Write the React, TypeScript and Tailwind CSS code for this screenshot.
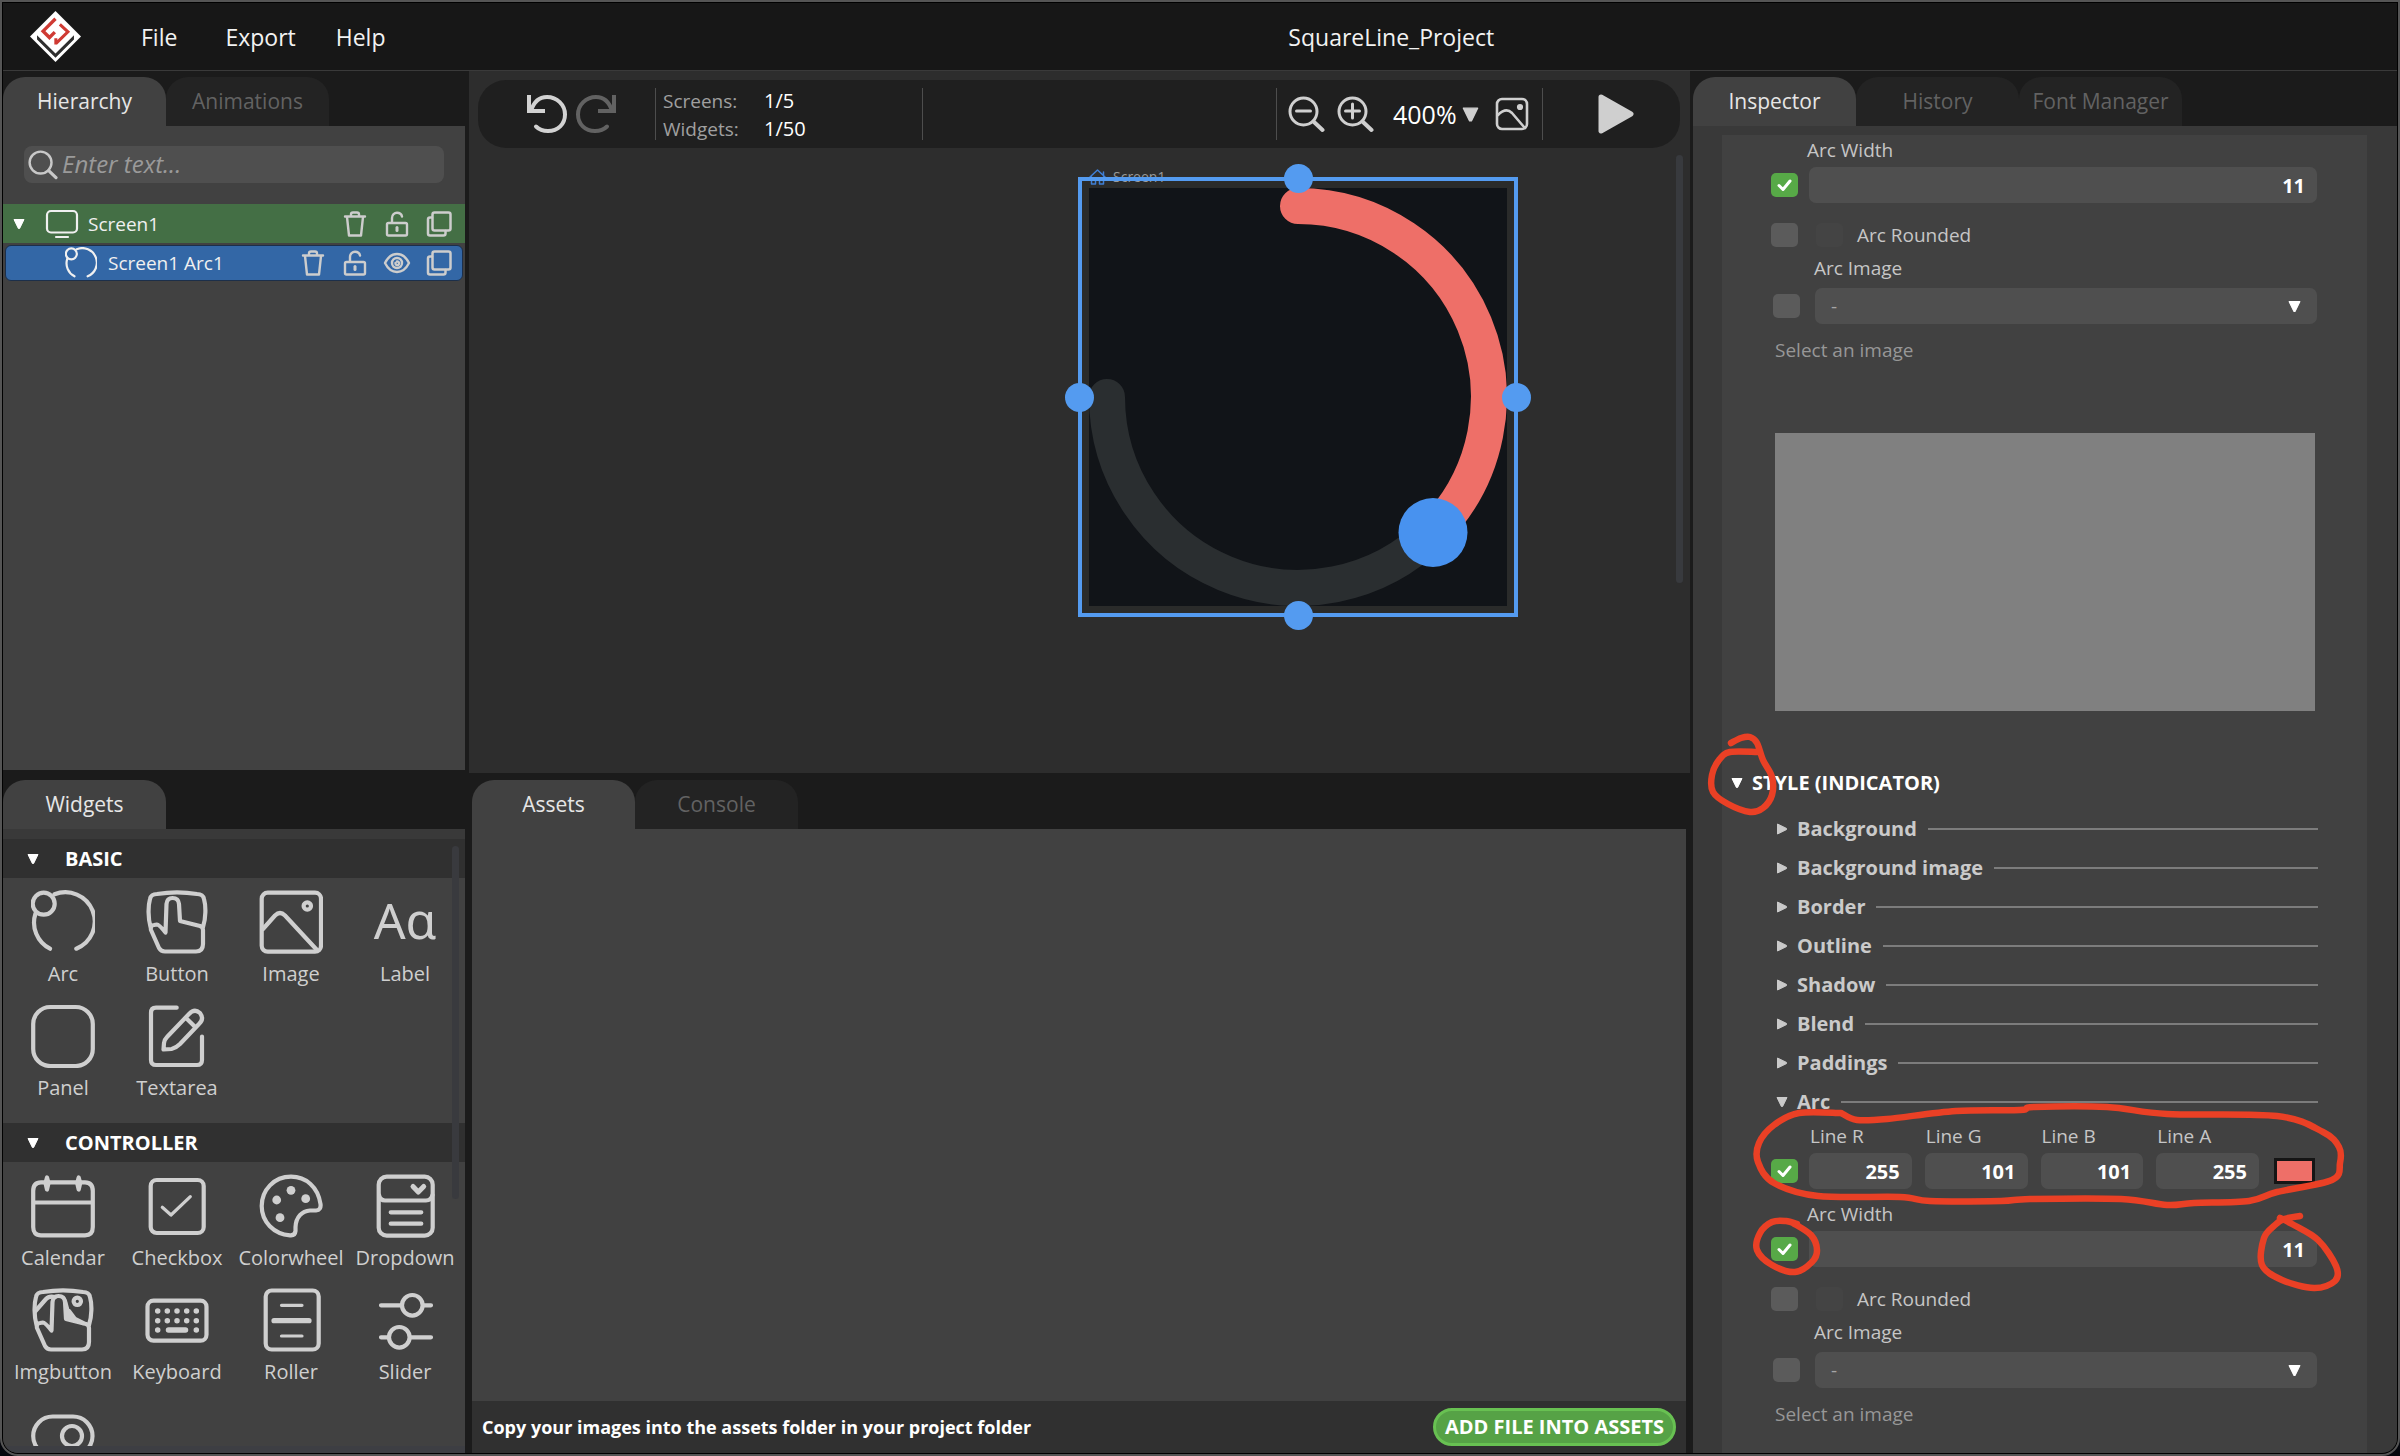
import React, { useId } from "react";

type IconProps = { className?: string };

const stroke = {
  fill: "none",
  stroke: "currentColor",
  strokeLinecap: "round" as const,
  strokeLinejoin: "round" as const,
};

/* ---------- small icons ---------- */

function Triangle({ className = "", dir = "down" }: IconProps & { dir?: "down" | "right" }) {
  return (
    <svg viewBox="0 0 12 12" className={className} aria-hidden="true">
      <path d={dir === "down" ? "M1 1.5H11L6.6 10.5H5.4Z" : "M1.5 1V11L10.5 6.6V5.4Z"} fill="currentColor" stroke="currentColor" strokeLinejoin="round" />
    </svg>
  );
}

function Logo() {
  return (
    <svg viewBox="91 31 152 152" className="size-[51px] shrink-0" role="img" aria-label="SquareLine">
      <path d="M167 31L243 107L167 183L91 107Z" fill="#fff" />
      <path d="M167 54L130 91L149 110L165 94" fill="none" stroke="#cf3a33" strokeWidth="10" />
      <path d="M180 71L204 93L168 128M168 131V112" fill="none" stroke="#cf3a33" strokeWidth="9" />
      <path d="M112 103L167 158L222 103V116L167 170L112 116Z" fill="#2e2e2e" />
    </svg>
  );
}

function SearchIcon({ className = "", sign }: IconProps & { sign?: "minus" | "plus" }) {
  return (
    <svg viewBox="0 0 37 37" className={className} aria-hidden="true" {...stroke} strokeWidth="3">
      <circle cx="15.5" cy="15.5" r="13.5" />
      <path d="M25.5 25.5L34.5 34" strokeWidth="4" />
      {sign && <path d="M8.5 15H22.5" />}
      {sign === "plus" && <path d="M15.5 8V22" />}
    </svg>
  );
}

function MonitorIcon() {
  return (
    <svg viewBox="0 0 34 30" className="h-[30px] w-[34px]" aria-hidden="true" {...stroke} strokeWidth="2.2">
      <rect x="2" y="2" width="30" height="21.5" rx="4" />
      <path d="M11 28H23" />
    </svg>
  );
}

function TrashIcon() {
  return (
    <svg viewBox="0 0 28 28" className="size-7" aria-hidden="true" {...stroke} strokeWidth="2.4">
      <path d="M4 6.5H24M10 6V4.2Q10 2.5 12 2.5H16Q18 2.5 18 4.2V6M6 7L8 25.5H20L22 7" />
    </svg>
  );
}

function LockIcon() {
  return (
    <svg viewBox="0 0 28 28" className="size-7" aria-hidden="true" {...stroke} strokeWidth="2.4">
      <rect x="4" y="13" width="20" height="12.5" rx="1.5" />
      <path d="M9 12.5V8C9 4.5 11.5 2.8 14 2.8C16.5 2.8 18.5 4.2 19 6.5" />
      <path d="M14 17.5V20.5" strokeWidth="3" />
    </svg>
  );
}

function CopyIcon() {
  return (
    <svg viewBox="0 0 28 28" className="size-7" aria-hidden="true" {...stroke} strokeWidth="2.5">
      <rect x="7.5" y="2.5" width="18" height="18" rx="2" />
      <path d="M7 7.5H5Q3 7.5 3 9.5V23.5Q3 25.5 5 25.5H18.5Q20.5 25.5 20.5 23.5V21" />
    </svg>
  );
}

function EyeIcon() {
  return (
    <svg viewBox="0 0 28 28" className="size-7" aria-hidden="true" {...stroke} strokeWidth="2.4">
      <path d="M2 14C5 8 9.5 5 14 5S23 8 26 14C23 20 18.5 23 14 23S5 20 2 14Z" />
      <circle cx="14" cy="14" r="5" />
      <path d="M14 12.5A1.8 1.8 0 1 1 12.5 14" />
    </svg>
  );
}

function PictureIcon() {
  return (
    <svg viewBox="0 0 34 34" className="size-[34px]" aria-hidden="true" {...stroke} strokeWidth="2.6">
      <rect x="2" y="2" width="30" height="30" rx="5" />
      <path d="M3 18Q11 10 17 16L29 30" />
      <circle cx="25" cy="10" r="1.8" fill="currentColor" />
    </svg>
  );
}

function UndoIcon({ className = "", flip = false }: IconProps & { flip?: boolean }) {
  return (
    <svg viewBox="0 0 40 40" className={className} aria-hidden="true" {...stroke} strokeWidth="4">
      <g transform={flip ? "translate(40 0) scale(-1 1)" : undefined}>
        <path d="M4 17C7 7 13 3 20 3C30 3 38 11 38 20.5C38 30 31 37 21 37C16 37 11.5 35 9 32.5" />
        <path d="M2 3V17H16" strokeLinecap="square" strokeLinejoin="miter" />
      </g>
    </svg>
  );
}

function PlayIcon() {
  return (
    <svg viewBox="0 0 36 40" className="h-10 w-9" aria-hidden="true">
      <path d="M3 3L33 20L3 37Z" fill="currentColor" stroke="currentColor" strokeWidth="5" strokeLinejoin="round" />
    </svg>
  );
}

function HomeIcon() {
  return (
    <svg viewBox="0 0 17 16" className="h-4 w-[17px]" aria-hidden="true" {...stroke} strokeWidth="1.5">
      <path d="M1 8L8.5 1L16 8M2.5 8V15H6.5V10.5H10.5V15H14.5V8M14.5 3V6" />
    </svg>
  );
}

/* ---------- widget palette icons, 64 x 64 ---------- */

const handOutline = "M5.5 37C3 28 3 16 5 9Q6 4 12 4C24 2 40 2 52 4Q58 4 59 9C61 16 61 28 58 37";
const handShape =
  "M6 40Q5 35.5 9 35L12 34.5Q14 34.5 20.5 42.5L21.5 14Q22 8 27.5 8Q33.5 8 34 14L35 31L55 36Q58 37 58 40V54Q58 61.5 51 61.5H20Q16 61.5 14 58Z";

const glyphs: Record<string, React.ReactNode> = {
  Arc: (
    <>
      <circle cx="12.7" cy="13.7" r="11" />
      <path d="M23.5 4.3A29.3 29.3 0 0 1 45.3 58.7M4.5 23.5A29.3 29.3 0 0 0 19 58.7" />
    </>
  ),
  Button: <path d={handOutline + handShape} />,
  Image: (
    <>
      <rect x="2.7" y="2.7" width="59.3" height="59" rx="6" />
      <path d="M4 39L16 25.5Q21 20.5 26 25.5L57.5 59.5" />
      <circle cx="48.3" cy="16" r="3.7" />
    </>
  ),
  Panel: <rect x="2.2" y="3" width="59.6" height="59" rx="17" />,
  Textarea: (
    <>
      <path d="M31.7 3.7H11Q6 3.7 6 9V56Q6 61 11 61H52Q57 61 57 56V32.5" />
      <path d="M18.5 45.5L19 39Q19.5 35.5 22 33L44 10Q49.5 4 55 9Q59.5 15 54 20L35 40Q31 44 26.5 45ZM40.7 13.7L50 22.7" />
    </>
  ),
  Calendar: (
    <>
      <path d="M10 8.3H54Q61.8 8.3 61.8 17V53Q61.8 61.3 54 61.3H10Q2.2 61.3 2.2 53V17Q2.2 8.3 10 8.3ZM3 28.5H61" />
      <path d="M16 3.5L17.5 9L16 15.5L14.5 9ZM47.7 3.5L49.2 9L47.7 15.5L46.2 9Z" />
    </>
  ),
  Checkbox: (
    <>
      <rect x="5.7" y="6" width="53" height="53" rx="6" />
      <path d="M17.3 33.3L26 41L45.3 22.7" strokeWidth="3.2" />
    </>
  ),
  Colorwheel: (
    <>
      <path d="M61.5 30C59 13 47 2.7 32 2.7C15 2.7 2.7 16 2.7 32C2.7 48 15 60 31 61.3Q36 61.8 36.5 57V53C37 43 43 37 51 36.5H57Q62.3 36 61.5 30Z" />
      <g fill="currentColor" stroke="none">
        <circle cx="32" cy="16.3" r="4.4" />
        <circle cx="17.7" cy="26" r="4.4" />
        <circle cx="46.7" cy="24.7" r="4.4" />
        <circle cx="21" cy="43.7" r="4.4" />
      </g>
    </>
  ),
  Dropdown: (
    <>
      <rect x="5.7" y="2.7" width="54" height="59" rx="8" />
      <path d="M6 21Q7 26.5 12 26.5H53Q58 26.5 59.5 21M17.7 38.3H48.3M17.7 49.7H48.3" />
      <path d="M40 12.5L45.3 18L50.7 12.5" strokeWidth="5" />
    </>
  ),
  Imgbutton: (
    <>
      <path d={handOutline + handShape} />
      <path d="M4.5 23L15 11Q18 7.5 24 9M34 13L38 28L52 35M38 23L44 31" />
      <circle cx="46.3" cy="13.3" r="3.7" />
    </>
  ),
  Keyboard: (
    <>
      <rect x="2.5" y="12.7" width="59" height="40" rx="6" />
      <path d="M23.5 42H40.5" strokeWidth="5.5" />
      <g strokeWidth="5.5">
        <path d="M12.7 23h.01M22.3 23h.01M32 23h.01M41.7 23h.01M51.3 23h.01" />
        <path d="M12.7 32.7h.01M22.3 32.7h.01M32 32.7h.01M41.7 32.7h.01M51.3 32.7h.01" />
        <path d="M12.7 42h.01M51.3 42h.01" />
      </g>
    </>
  ),
  Roller: (
    <>
      <rect x="6.7" y="2.5" width="53" height="59" rx="6" />
      <path d="M22.5 17.3H43M22.5 48H43" strokeWidth="3.2" />
      <path d="M15 32.7H50" strokeWidth="5.2" />
    </>
  ),
  Slider: (
    <>
      <circle cx="39.3" cy="17.3" r="10.3" />
      <circle cx="26.3" cy="49.3" r="10.3" />
      <path d="M8 17.3H28M51 17.3H58M8 49.3H15M38 49.3H58" />
    </>
  ),
  Switch: (
    <>
      <rect x="2.2" y="14.5" width="59.3" height="39" rx="19.5" />
      <circle cx="41" cy="34" r="10" />
    </>
  ),
};

function WidgetIcon({ name, className = "size-16", weight = 4.2 }: { name: string; className?: string; weight?: number }) {
  if (name === "Label") {
    return (
      <span aria-hidden="true" className="flex h-16 items-center justify-center pb-1 font-['Noto_Sans'] text-[50px] leading-none">
        Aɑ
      </span>
    );
  }
  return (
    <svg viewBox="0 0 64 64" className={className} aria-hidden="true" {...stroke} strokeWidth={weight}>
      {glyphs[name]}
    </svg>
  );
}

/* ---------- shared pieces ---------- */

function Tabs({ tabs }: { tabs: string[] }) {
  return (
    <div role="tablist" className="flex h-[49px]">
      {tabs.map((t, i) => (
        <button
          key={t}
          role="tab"
          aria-selected={i === 0}
          className={
            "w-[163px] rounded-t-[22px] pb-0.5 text-[21px] leading-7 whitespace-nowrap " +
            (i === 0 ? "bg-[#414141] text-[#e6e6e6]" : "bg-[#232323] text-[#626262]")
          }
        >
          {t}
        </button>
      ))}
    </div>
  );
}

function RowButton({ label, children }: { label: string; children: React.ReactNode }) {
  return (
    <button aria-label={label} className="text-[#cdcdcd]">
      {children}
    </button>
  );
}

/* ---------- left column ---------- */

function Hierarchy() {
  return (
    <section className="flex min-h-0 flex-1 flex-col pt-1.5">
      <Tabs tabs={["Hierarchy", "Animations"]} />
      <div className="flex-1 bg-[#414141] pt-5">
        <label className="mr-[21px] ml-[21px] flex h-[37px] items-center gap-1 rounded-lg bg-[#4f4f4f] pl-1">
          <SearchIcon className="size-[30px] text-[#c8c8c8]" />
          <input
            aria-label="Search hierarchy"
            placeholder="Enter text..."
            className="min-w-0 flex-1 bg-transparent pb-0.5 text-2xl leading-8 text-white italic outline-none placeholder:text-[#9a9a9a]"
          />
        </label>
        <ul className="mt-[21px] text-[19px] leading-7 text-[#f0f0f0]">
          <li className="flex h-[39px] items-center bg-[#446f45] pr-3 pl-2.5">
            <Triangle className="size-3 text-white" />
            <span className="ml-5">
              <MonitorIcon />
            </span>
            <span className="ml-[9px] flex-1">Screen1</span>
            <span className="flex gap-[14px]">
              <RowButton label="Delete Screen1"><TrashIcon /></RowButton>
              <RowButton label="Lock Screen1"><LockIcon /></RowButton>
              <RowButton label="Duplicate Screen1"><CopyIcon /></RowButton>
            </span>
          </li>
          <li className="mx-0.5 mt-0.5 flex h-9 items-center rounded-md border border-[#1c2f4a] bg-[#3367a6] pr-[9px] pl-[59px]">
            <WidgetIcon name="Arc" className="size-8" weight={4.4} />
            <span className="ml-[11px] flex-1">Screen1 Arc1</span>
            <span className="flex gap-[14px]">
              <RowButton label="Delete Arc1"><TrashIcon /></RowButton>
              <RowButton label="Lock Arc1"><LockIcon /></RowButton>
              <RowButton label="Hide Arc1"><EyeIcon /></RowButton>
              <RowButton label="Duplicate Arc1"><CopyIcon /></RowButton>
            </span>
          </li>
        </ul>
      </div>
    </section>
  );
}

function PaletteGroup({ title, items, more }: { title: string; items: string[]; more?: string }) {
  return (
    <div>
      <button className="flex h-[39px] w-full items-center gap-[26px] bg-[#303030] pl-6 text-xl leading-6 font-bold text-white">
        <Triangle className="size-3" />
        {title}
      </button>
      <div className="grid grid-cols-4 gap-y-4 px-[3px] pt-3 pb-[21px]">
        {items.map((n) => (
          <button key={n} className="flex h-[98px] flex-col items-center justify-between text-xl leading-7 text-[#cfcfcf]">
            <WidgetIcon name={n} />
            {n}
          </button>
        ))}
        {more && (
          <button aria-label={more} className="flex justify-center text-[#cfcfcf]">
            <WidgetIcon name={more} />
          </button>
        )}
      </div>
    </div>
  );
}

function Widgets() {
  return (
    <section className="flex h-[683px] flex-col pt-2.5">
      <Tabs tabs={["Widgets"]} />
      <div className="relative flex min-h-0 flex-1 flex-col border-t-[10px] border-[#393939] bg-[#414141]">
        <div className="min-h-0 flex-1 overflow-hidden">
          <PaletteGroup title="BASIC" items={["Arc", "Button", "Image", "Label", "Panel", "Textarea"]} />
          <PaletteGroup
            title="CONTROLLER"
            items={["Calendar", "Checkbox", "Colorwheel", "Dropdown", "Imgbutton", "Keyboard", "Roller", "Slider"]}
            more="Switch"
          />
        </div>
        <div className="h-[7px] bg-[#3d3e43]" />
        <div className="absolute top-[7px] right-1.5 h-[353px] w-[7px] rounded-full bg-[#393a3e]" />
      </div>
    </section>
  );
}

/* ---------- centre column ---------- */

const divider = "h-[52px] w-px bg-[#4d4d4d]";

function Toolbar() {
  return (
    <div className="mr-2.5 ml-[9px] flex h-[68px] items-center rounded-[28px] bg-[#1f1f1f] pr-[46px] pl-[49px]">
      <button aria-label="Undo"><UndoIcon className="size-10 text-[#d2d2d2]" /></button>
      <button aria-label="Redo" className="ml-[9px]"><UndoIcon flip className="size-10 text-[#626262]" /></button>
      <div className={"ml-[39px] " + divider} />
      <dl className="grid w-[266px] grid-cols-[101px_1fr] pt-0.5 pl-[7px] leading-7">
        <dt className="text-[19px] text-[#a0a0a0]">Screens:</dt>
        <dd className="text-xl leading-7 text-white">1/5</dd>
        <dt className="text-[19px] text-[#a0a0a0]">Widgets:</dt>
        <dd className="text-xl leading-7 text-white">1/50</dd>
      </dl>
      <div className={divider} />
      <div className="ml-auto flex items-center text-[#cfcfcf]">
        <div className={divider} />
        <button aria-label="Zoom out" className="ml-[11px]"><SearchIcon sign="minus" className="size-[37px]" /></button>
        <button aria-label="Zoom in" className="ml-3"><SearchIcon sign="plus" className="size-[37px]" /></button>
        <button className="ml-[19px] flex w-[90px] items-center gap-[5px] text-[25px] leading-8 text-white">
          400%
          <Triangle className="size-[17px] shrink-0 text-[#cfcfcf]" />
        </button>
        <button aria-label="Background picture" className="ml-3"><PictureIcon /></button>
        <div className={"ml-[13px] " + divider} />
        <button aria-label="Play" className="ml-[55px]"><PlayIcon /></button>
      </div>
    </div>
  );
}

const handle = "absolute size-[29px] rounded-full bg-[#549bf0]";

function Canvas() {
  return (
    <div className="relative flex min-h-0 flex-1 flex-col overflow-hidden bg-[#2d2d2d] pt-[9px]">
      <Toolbar />
      <div className="absolute top-[117px] left-[620px] size-[418px] bg-[#111418] ring-[7px] ring-[#2a2b2a]">
        <svg viewBox="0 0 418 418" className="size-full" role="img" aria-label="Arc" fill="none" strokeWidth="36" strokeLinecap="round">
          <path d="M18 209A191 191 0 0 0 344 344" stroke="#2a2e30" />
          <path d="M209 18A191 191 0 0 1 344 344" stroke="#ee6f68" />
          <circle cx="344" cy="344.5" r="34.5" fill="#4892ef" />
        </svg>
        <div className="absolute -top-[21px] left-0 flex items-center gap-[7px] text-sm leading-5 text-[#999]">
          <span className="text-[#3f7fd6]"><HomeIcon /></span>
          Screen1
        </div>
        <div className="absolute -inset-[11px] border-4 border-[#549bf0]">
          <span className={handle + " -top-[17px] left-[202px]"} />
          <span className={handle + " top-[202px] -left-[17px]"} />
          <span className={handle + " top-[202px] -right-[17px]"} />
          <span className={handle + " -bottom-[17px] left-[202px]"} />
        </div>
      </div>
      <div className="absolute top-[84px] right-[7px] h-[428px] w-[7px] rounded-full bg-[#383a3e]" />
    </div>
  );
}

function Assets() {
  return (
    <section className="flex h-[680px] flex-col pt-[7px] pr-1 pl-[3px]">
      <Tabs tabs={["Assets", "Console"]} />
      <div className="flex-1 bg-[#414141]" />
      <div className="flex h-[52px] items-center justify-between bg-[#303030] pr-2.5 pl-2.5 font-bold text-white">
        <p className="text-lg leading-6">Copy your images into the assets folder in your project folder</p>
        <button className="h-[38px] w-[243px] rounded-full border-[3px] border-[#68c152] bg-[#56a246] text-xl leading-6 whitespace-nowrap">
          ADD FILE INTO ASSETS
        </button>
      </div>
    </section>
  );
}

/* ---------- inspector ---------- */

function Tick({ label, checked = false, id, faint = false }: { label?: string; checked?: boolean; id?: string; faint?: boolean }) {
  return (
    <span className="relative flex h-6 w-[27px] shrink-0">
      <input
        id={id}
        type="checkbox"
        aria-label={label}
        defaultChecked={checked}
        className={
          "peer size-full appearance-none rounded-[5px] checked:bg-[#57a947] " + (faint ? "bg-[#444444]" : "bg-[#5b5b5b]")
        }
      />
      <svg viewBox="0 0 27 24" className="pointer-events-none absolute inset-0 hidden peer-checked:block" aria-hidden="true">
        <path d="M8 12.5L12 16.5L19 8" fill="none" stroke="#fff" strokeWidth="3" strokeLinecap="round" strokeLinejoin="round" />
      </svg>
    </span>
  );
}

const numberBox =
  "h-9 w-full min-w-0 rounded-[7px] bg-[#4f4f4f] pr-3 text-right text-xl leading-6 font-bold text-white outline-none";

function ArcFields() {
  const id = useId();
  return (
    <div className="pr-[50px] pl-[49px] text-[19px] leading-6 text-[#c6c6c6]">
      <label htmlFor={id + "w"} className="ml-9 block">Arc Width</label>
      <div className="mt-[5px] flex items-center gap-[11px]">
        <Tick label="Override arc width" checked />
        <input id={id + "w"} defaultValue="11" className={numberBox} />
      </div>
      <div className="mt-3.5 flex h-9 items-center">
        <Tick label="Override arc rounded" />
        <span className="ml-[18px] flex"><Tick faint id={id + "r"} /></span>
        <label htmlFor={id + "r"} className="ml-3.5">Arc Rounded</label>
      </div>
      <label htmlFor={id + "i"} className="mt-[3px] ml-[43px] block">Arc Image</label>
      <div className="mt-2 flex items-center gap-[15px] pl-0.5">
        <Tick label="Override arc image" />
        <span className="relative flex flex-1 items-center">
          <select id={id + "i"} className="h-9 w-full appearance-none rounded-[7px] bg-[#4f4f4f] pl-4 text-[#a5a5a5] outline-none">
            <option>-</option>
          </select>
          <Triangle className="pointer-events-none absolute right-4 size-[13px] text-white" />
        </span>
      </div>
      <p className="mt-3.5 pl-1 text-[#979797]">Select an image</p>
    </div>
  );
}

function SubSection({ title, open = false }: { title: string; open?: boolean }) {
  return (
    <button className="flex h-[39px] w-full items-center pr-[49px] pl-[54px] text-xl leading-6 font-bold text-[#cacaca]">
      <Triangle dir={open ? "down" : "right"} className="size-3" />
      <span className="ml-[9px]">{title}</span>
      <span className="ml-[11px] h-0.5 flex-1 bg-[#7c7c7c]" />
    </button>
  );
}

const channels = [
  ["Line R", "255"],
  ["Line G", "101"],
  ["Line B", "101"],
  ["Line A", "255"],
];

function LineColor() {
  return (
    <div className="mt-[3px] flex items-end pr-[52px] pl-[49px] text-[19px] leading-6 text-[#c6c6c6]">
      <span className="mr-[11px] pb-1.5"><Tick label="Override line colour" checked /></span>
      <div className="grid flex-1 grid-cols-4 gap-[13px]">
        {channels.map(([name, value]) => (
          <label key={name} className="flex flex-col gap-[5px]">
            <span className="pl-px">{name}</span>
            <input defaultValue={value} className={numberBox} />
          </label>
        ))}
      </div>
      <button aria-label="Pick line colour" className="mb-[5px] ml-[15px] h-[26px] w-[41px] border-[3px] border-[#151515] bg-[#ee6f68]" />
    </div>
  );
}

type Pt = [number, number];

/* Smooth pen stroke through a list of points. */
function pen(points: Pt[]) {
  let d = `M${points[0][0]} ${points[0][1]}`;
  for (let i = 0; i < points.length - 1; i++) {
    const p0 = points[Math.max(0, i - 1)];
    const p1 = points[i];
    const p2 = points[i + 1];
    const p3 = points[Math.min(points.length - 1, i + 2)];
    d += `C${p1[0] + (p2[0] - p0[0]) / 6} ${p1[1] + (p2[1] - p0[1]) / 6} ${p2[0] - (p3[0] - p1[0]) / 6} ${p2[1] - (p3[1] - p1[1]) / 6} ${p2[0]} ${p2[1]}`;
  }
  return d;
}

const marks: Pt[][] = [
  [[1731, 743], [1741, 738], [1750, 737], [1757, 743], [1763, 760], [1772, 777], [1772, 795], [1763, 808], [1750, 812], [1728, 804], [1713, 792], [1712, 775], [1719, 760], [1730, 752], [1757, 752]],
  [[1841, 1113], [1799, 1113], [1774, 1125], [1759, 1143], [1758, 1162], [1774, 1183], [1818, 1196], [1900, 1197], [1930, 1201], [2001, 1201], [2030, 1199], [2121, 1199], [2167, 1205], [2194, 1203], [2249, 1201], [2277, 1192], [2332, 1180], [2340, 1163], [2339, 1147], [2323, 1132], [2277, 1116], [2167, 1114], [2107, 1107], [2034, 1107], [2020, 1110], [1956, 1111], [1887, 1119], [1857, 1120], [1841, 1113]],
  [[1797, 1224], [1786, 1221], [1772, 1222], [1760, 1233], [1757, 1250], [1772, 1265], [1795, 1272], [1812, 1262], [1817, 1250], [1811, 1235], [1793, 1223]],
  [[2300, 1216], [2284, 1219], [2275, 1225], [2264, 1238], [2262, 1265], [2282, 1280], [2314, 1288], [2335, 1281], [2336, 1266], [2318, 1240], [2292, 1224], [2280, 1218]],
];

function Annotations() {
  return (
    <svg
      viewBox="1693 71 704 1382"
      className="pointer-events-none absolute top-0 right-0 h-[1382px] w-[704px]"
      aria-hidden="true"
      fill="none"
      stroke="#ea4025"
      strokeWidth="6.5"
      strokeLinecap="round"
      strokeLinejoin="round"
    >
      {marks.map((m, i) => (
        <path key={i} d={pen(m)} />
      ))}
    </svg>
  );
}

function Inspector() {
  return (
    <aside className="relative flex w-[704px] shrink-0 flex-col pt-1.5">
      <Tabs tabs={["Inspector", "History", "Font Manager"]} />
      <div className="flex min-h-0 flex-1 flex-col bg-[#393939] pt-[9px] pr-[30px] pl-[29px]">
        <div className="min-h-0 flex-1 overflow-hidden bg-[#414141] pt-[3px]">
          <ArcFields />
          <div className="mt-[71px] mr-[52px] ml-[53px] h-[278px] bg-[#808080]" />
          <button className="mt-[60px] flex h-6 items-center gap-[9px] pl-[9px] text-xl leading-6 font-bold text-white">
            <Triangle className="size-3" />
            STYLE (INDICATOR)
          </button>
          <div className="mt-3.5">
            {["Background", "Background image", "Border", "Outline", "Shadow", "Blend", "Paddings"].map((t) => (
              <SubSection key={t} title={t} />
            ))}
            <SubSection title="Arc" open />
          </div>
          <LineColor />
          <div className="mt-[13px]">
            <ArcFields />
          </div>
        </div>
      </div>
      <Annotations />
    </aside>
  );
}

export default function App() {
  return (
    <div className="h-screen overflow-hidden bg-[#05070d] font-['Open_Sans',sans-serif]">
      <div className="flex h-full flex-col overflow-hidden rounded-b-[18px] border-2 border-[#555555] bg-black p-px">
        <header className="flex h-[68px] shrink-0 items-center border-b border-[#3a3a3a] bg-[#171717] pl-[27px] text-[23px] leading-8 text-[#f2f2f2]">
          <Logo />
          <nav className="ml-[60px] flex">
            <button>File</button>
            <button className="ml-12">Export</button>
            <button className="ml-10">Help</button>
          </nav>
          <h1 className="flex-1 text-center">SquareLine_Project</h1>
        </header>
        <main className="flex min-h-0 flex-1 overflow-hidden rounded-b-[15px] bg-[#1b1b1b]">
          <div className="flex w-[462px] shrink-0 flex-col">
            <Hierarchy />
            <Widgets />
          </div>
          <div className="mr-[3px] ml-1 flex min-w-0 flex-1 flex-col">
            <Canvas />
            <Assets />
          </div>
          <Inspector />
        </main>
      </div>
    </div>
  );
}
